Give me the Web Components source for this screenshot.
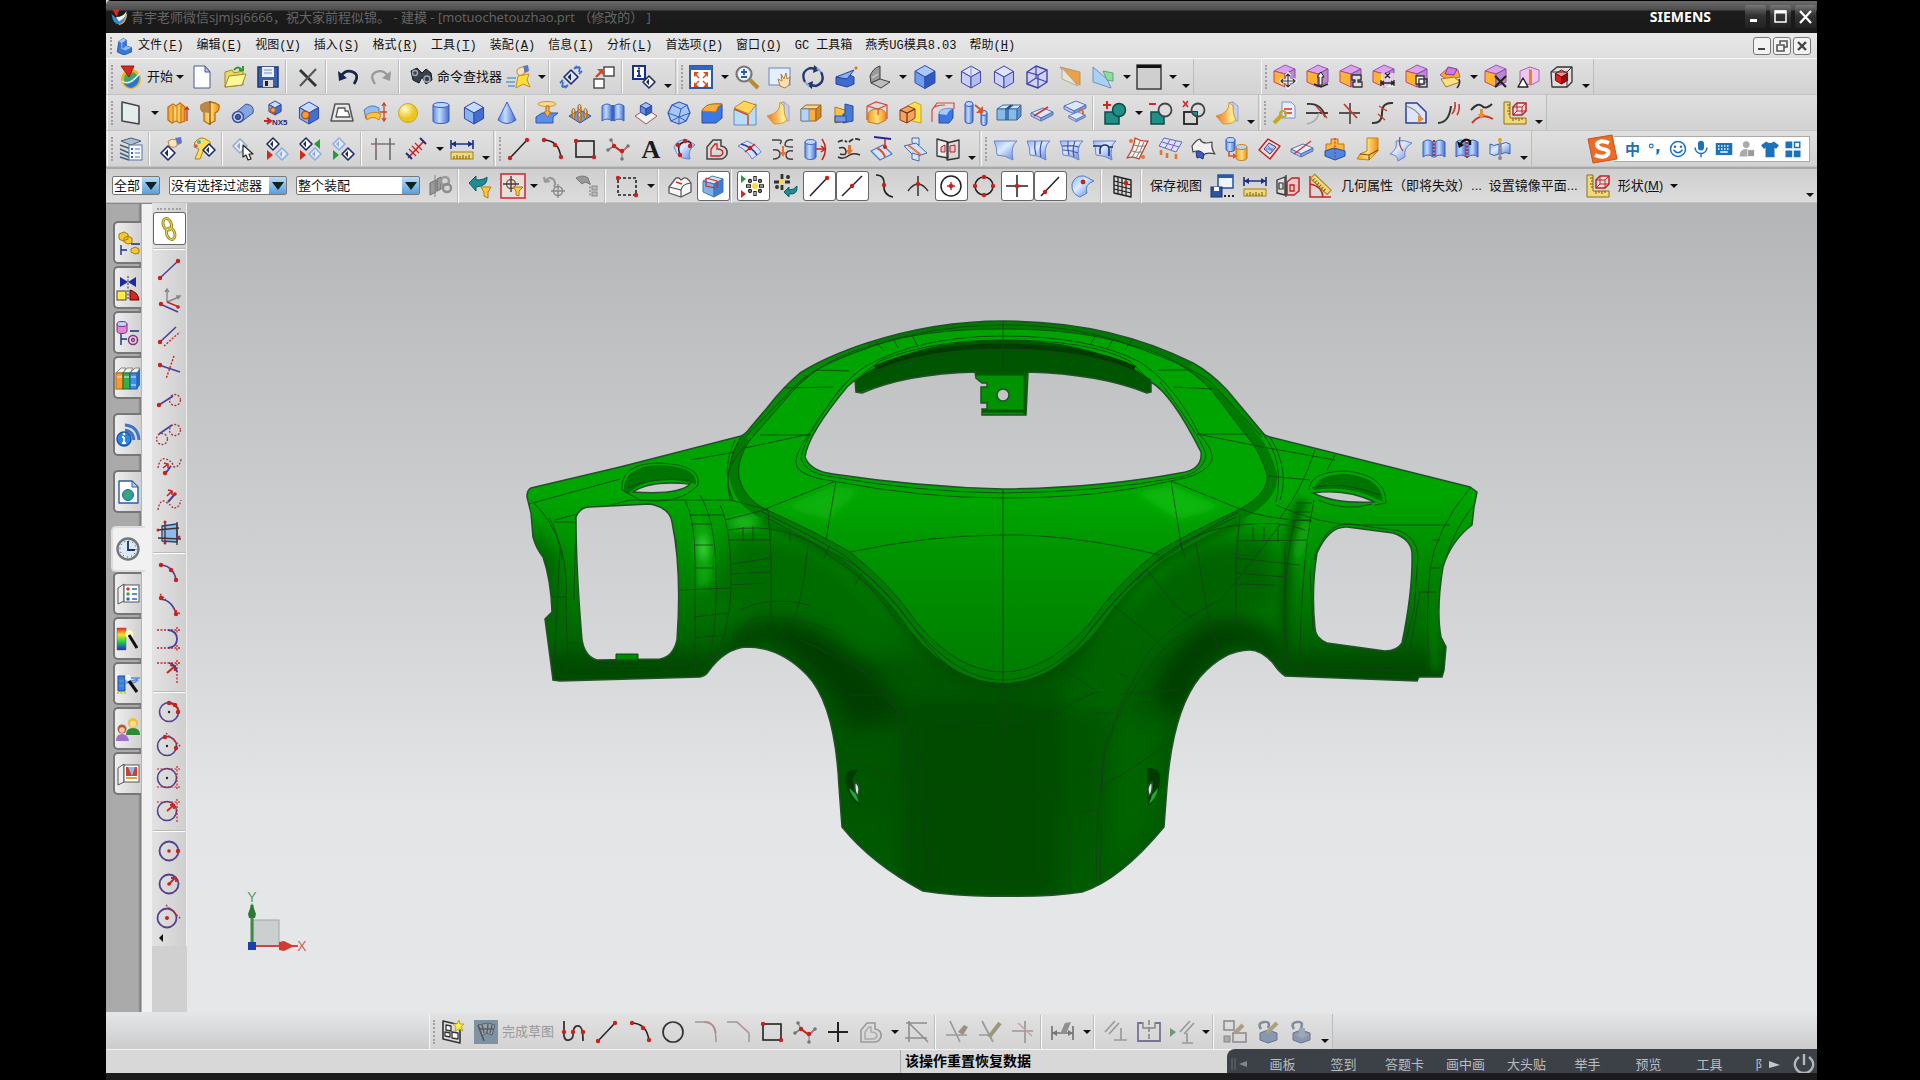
<!DOCTYPE html>
<html lang="zh-CN">
<head>
<meta charset="utf-8">
<title>建模 - motuochetouzhao.prt</title>
<style>
	html, body { margin: 0; height: 100%; background: #000; }
	body { font-family: "Liberation Sans", "Noto Sans CJK SC", sans-serif; font-size: 13px; color: #111; }
</style>
</head>
<body>
<nx-window>
	<nx-titlebar slot="title">青宇老师微信sjmjsj6666，祝大家前程似锦。 - 建模 - [motuochetouzhao.prt （修改的） ]</nx-titlebar>
	<nx-menubar slot="menu"></nx-menubar>
	<nx-row slot="bars">
		<nx-toolbar items="start:开始 v new open save | cut | undo redo | binoc:命令查找器 hand v | swap parts | info ;"></nx-toolbar>
		<nx-toolbar items="fit v zoom pan rotate persp laptop v shaded v wire1 wire2 wire3 clipA clipB v swatch v ;"></nx-toolbar>
		<nx-toolbar apart items="mvMove mvPull mvPat mvDim mvGroup mvFold v mvDel mvTri mvRed ;"></nx-toolbar>
	</nx-row>
	<nx-row slot="bars">
		<nx-toolbar items="datum v extrude revolve tube nx5 block pocket bend sphere cyl box cone | hole pegs ribs pad gem edge draft flange shellA trimB domeA offsetB round scale split thick pieces | unite v subtract intersect flangeB ;"></nx-toolbar>
		<nx-toolbar items="wrench jn1 jn2 jn3 corner jn4 jn5 measureBox ;"></nx-toolbar>
	</nx-row>
	<nx-row slot="bars">
		<nx-toolbar items="layers | handDiamond paint | pick diaA diaB diaC | hash comb v ruler ;"></nx-toolbar>
		<nx-toolbar items="line arc rect spline letter curveSheet offsetCurve sheetCurve bridge project joinCurve onSheet cross mirror ;"></nx-toolbar>
		<nx-toolbar items="surf1 surf2 surf3 surf4 mesh meshB drape bodies pad3d thickB plusBody boot twist sew unsew pinch ;"></nx-toolbar>
		<nx-ime></nx-ime>
	</nx-row>
	<nx-row slot="bars" last>
		<nx-filter wide="48" label="类型过滤器">全部</nx-filter>
		<nx-filter wide="118" label="选择过滤器">没有选择过滤器</nx-filter>
		<nx-filter wide="124" label="范围">整个装配</nx-filter>
		<nx-toolbar plain items="chainGrey | teal target u greyA greyB | marquee v | house cubeSel* | snapAll* snapCfg snapEnd* snapMid* snapCurve snapCross snapCenter* snapQuad snapPoint* snapOn* snapFace | grid | _:保存视图 saveView ruler boxes angle _:几何属性（即将失效）... _:设置镜像平面... measureBox _:形状(M) v"></nx-toolbar>
		<nx-toolbar plain end items=";"></nx-toolbar>
	</nx-row>
	<nx-tabs slot="side"></nx-tabs>
	<nx-toolbar slot="side" vertical items="chain* | vLine vAxes vPar vPerp vTan1 vTan2 vFree1 vFree2 vBox | vArc vArc2 vArc3 vArc4 | vC1 vC2 vC3 vC4 | vC5 vC6 vC7 <"></nx-toolbar>
	<nx-viewport slot="view"></nx-viewport>
	<nx-row slot="foot" foot>
		<nx-toolbar items="sketch finish:完成草图 profile line arc circle filletG chamferG rect spline plus offsetG v triG | trimG extendG cornerG | dimG v | perpG boxG autoG v | sqG lockG lockH ;"></nx-toolbar>
	</nx-row>
	<nx-status slot="status">该操作重置恢复数据</nx-status>
	<nx-dock slot="dock"></nx-dock>
</nx-window>

<script>
// ---------- icon drawing helpers, all on a 24 x 24 grid ----------
const L = (d, c = '#222', w = 1.5, x = '') => `<path d="${d}" fill="none" stroke="${c}" stroke-width="${w}" ${x}/>`;
const F = (d, f, s = 'none', w = 1) => `<path d="${d}" fill="${f}" stroke="${s}" stroke-width="${w}" stroke-linejoin="round"/>`;
const D = (x, y, r = 2.2, c = '#c8201c') => `<circle cx="${x}" cy="${y}" r="${r}" fill="${c}"/>`;
const O = (x, y, r, c = '#222', w = 1.5, f = 'none', x2 = '') => `<circle cx="${x}" cy="${y}" r="${r}" fill="${f}" stroke="${c}" stroke-width="${w}" ${x2}/>`;
const R = (x, y, w, h, f, s = 'none', sw = 1) => `<rect x="${x}" y="${y}" width="${w}" height="${h}" fill="${f}" stroke="${s}" stroke-width="${sw}"/>`;
const DASH = 'stroke-dasharray="2 1.5"';
const cube = (x, y, s, top, left, right, line = '#3346a0') => {
	const a = s * .87, b = s / 2;
	return F(`M${x} ${y - s}l${a} ${b}l${-a} ${b}l${-a} ${-b}z`, top, line)
		+ F(`M${x - a} ${y - b}l${a} ${b}v${s}l${-a} ${-b}z`, left, line)
		+ F(`M${x + a} ${y - b}l${-a} ${b}v${s}l${a} ${-b}z`, right, line);
};
const blueCube = (x = 12, y = 12, s = 11) => cube(x, y, s, '#c3dcff', '#86b4f5', '#456fce');
// front-left face large, as the move-face tools show it
const purple = F('M1 6L12 0L22 4L12 9z', '#d9a3ee', '#9a55b4') + F('M1 6L12 9V22L1 17z', '#ffb52c', '#c4447a') + F('M12 9L22 4V17L12 22z', '#b98ad0', '#8b4ba4');
const diamond = (x, y, s, f = '#fff', c = '#1d2c66') =>
	F(`M${x} ${y - s}l${s} ${s}l${-s} ${s}l${-s} ${-s}z`, f, c, 1.6) + F(`M${x} ${y - s * .55}v${s * 1.1}l${-s * .5} ${-s * .55}z`, c);
const rulerBar = R(1, 15, 22, 7, '#f3d87a', '#a08020') + L('M4 22v-3M7 22v-4M10 22v-3M13 22v-4M16 22v-3M19 22v-4', '#70590c', 1);
const sheet = (x = '') => F('M1 4H24Q17 9 20 23Q12 18 4 18Q4 10 1 4z', 'url(#gBlue)', '#6d83cc') + x;
const ribs = (x = '') => F('M1 5q5-4 10 0v15q-5-4-10 0z', 'url(#gBlueH)', '#3c64b4') + F('M13 5q5-4 10 0v15q-5-4-10 0z', 'url(#gBlueH)', '#3c64b4') + x;
const sweep = F('M14 2L18 1V13L21 20H23V5L18 1z', '#c3cff0', '#9aa5cc') + F('M14 1Q15 12 1 15L8 23Q20 23 21 18Q18 15 18 5z', 'url(#gSweep)', '#d49a38');
const cyl = (x, y, w, h, f = 'url(#gBlueH)', s = '#3a5cb8') =>
	F(`M${x} ${y}v${h}a${w / 2} 2.5 0 0 0 ${w} 0v${-h}`, f, s) + `<ellipse cx="${x + w / 2}" cy="${y}" rx="${w / 2}" ry="2.5" fill="#bcd6ff" stroke="${s}"/>`;
const slab = (y, f = '#dbe8fd') => F(`M1 ${y + 5}L13 ${y}L23 ${y + 4}L11 ${y + 10}z`, f, '#5a74b8') + F(`M1 ${y + 5}v3l10 5v-3z`, '#b4caf0', '#5a74b8') + F(`M23 ${y + 4}v3l-12 6v-3z`, '#7f9fdd', '#5a74b8');
const box3 = (f, g, h, s = '#9a6a20') => F('M2 8L7 4H22L17 8z', f, s) + F('M2 8h15v12H2z', g, s) + F('M17 8l5-4v12l-5 4z', h, s);
const ball = O(12, 12, 9.5, '#c9a820', 1, 'url(#gSphere)');
const knob = (x, y) => D(x, y, 1.8, '#777');
const lock = F('M4 13L12 10L21 13V20L12 23L4 20z', '#8797ad', '#66758c') + L('M5 9Q1 3 8 2T12 8', '#7e8b9c', 2.5);

const ICONS = {
	start: O(12, 14, 8.5, '#e8b419', 3, '#38a86b') + F('M4 16Q11 22 20 9Q22 20 12 23Q6 22 4 16z', '#2c76c9') + L('M3 16Q10 22 21 8', '#d7f0ff', 1.6) + F('M2 1L15 1L10 12z', '#d62822', '#9f1712'),
	new: F('M4 1H15L20 7V23H4z', '#fdfdff', '#4b5896') + F('M15 1V7H20z', '#b8c3e8', '#4b5896'),
	open: F('M2 7L9 5L11 8L20 6V20L2 22z', '#eadb60', '#a08b22') + F('M6 11L23 9L19 20L2 22z', '#fff79b', '#a08b22') + L('M11 5Q15 0 19 5M16 5h4V1', '#32973a', 2),
	save: R(2, 2, 20, 20, '#3a5fae', '#1c3678', 1.5) + R(6, 2, 12, 10, '#e9f0fb') + L('M8 5h8M8 8h8', '#7a8fc0', 1) + R(7, 15, 10, 7, '#d9d9d9') + R(9, 16, 3, 5, '#222'),
	cut: L('M4 5L20 21', '#333', 2.8) + L('M20 4L4 21', '#555', 2),
	undo: L('M18 19Q24 10 17 7Q10 4 5 11', '#15254f', 2.6) + F('M2 6L3 16L11 13z', '#15254f'),
	redo: L('M6 19Q0 10 7 7Q14 4 19 11', '#999', 2.2) + F('M22 6L21 16L13 13z', '#999'),
	binoc: F('M2 6L8 3L13 8L17 4L22 8L23 15L17 19L13 12L10 18L4 15z', '#3a3f4a', '#15171c') + O(6, 8, 2.5, '#9aa7bb', 1.4) + O(18, 14, 3, '#9aa7bb', 1.4),
	hand: F('M12 11L23 9L21 15L24 22L17 19L10 23L11 16z', '#ffdf3a', '#c98e12') + L('M1 13h9M0 17h9M2 21h7', '#5c9bd6', 1.6) + F('M11 5Q16 0 19 3L18 9Q13 12 11 8z', '#ffe1b5', '#b08a58') + F('M17 1l5-1l1 6l-4 2z', '#5a78c9'),
	swap: diamond(12, 12, 7, '#dfe6f7') + L('M3 22L8 21M3 22L4 17M21 2L16 3M21 2L20 7M4 15l-3 3M9 20l-3 3M15 4l3-3M20 9l3-3', '#3c6fd0', 1.8),
	parts: R(12, 2, 10, 9, '#fff', '#444', 1.4) + R(2, 14, 10, 9, '#fff', '#444', 1.4) + L('M4 12L9 7', '#d8441c', 2.4) + F('M5 4H11V10z', '#d8441c'),
	info: R(1, 1, 12, 13, '#fff', '#1b2f87', 2) + L('M7 5v6M5 11h4M5 6h2', '#1b2f87', 1.8) + R(6, 2.5, 2, 2, '#1b2f87') + diamond(17, 17, 6),
	fit: R(1, 1, 22, 22, '#fff', '#2c5aa8', 2) + R(1, 1, 22, 4, '#3168bd') + L('M6 9l4 4M18 9l-4 4M6 20l4-4M18 20l-4-4', '#dd4a1c', 1.4) + F('M5 7h5l-5 5zM19 7h-5l5 5zM5 22h5l-5-5zM19 22h-5l5-5z', '#dd4a1c'),
	zoom: L('M15 15L23 23', '#b58c36', 4) + O(9, 9, 7.5, '#777', 2.2, '#e9f2ff') + L('M9 4v6M6 7h6M6 12h6', '#3157a8', 1.8),
	pan: R(1, 3, 21, 17, '#e4efff', '#6d85bc') + F('M10 14L14 16L13 9L16 14L18 8L19 14L22 12L21 20L17 23L12 21z', '#ffe0b0', '#b07c33'),
	rotate: L('M4 17Q-1 7 9 3L15 4M20 7Q25 17 15 21L9 20', '#22386f', 2.4) + F('M13 0L19 5L12 8zM11 24L5 19L12 16z', '#22386f') + L('M4 17l4 4M20 7l-4-4', '#8fa9d8', 2),
	persp: F('M2 12L14 9L20 12V19L13 22L2 19z', '#3f6bd0', '#2541a0') + F('M2 12L20 5L13 14z', '#8bb0f5', '#2541a0') + D(22, 3, 1.5, '#dd6a1c'),
	laptop: F('M3 11Q6 3 13 1V14L4 18z', '#999', '#3f3f3f') + F('M4 18L13 14L23 17L14 23z', '#bdbdbd', '#3f3f3f') + L('M5 13L11 9', '#ccc', 1.5),
	shaded: cube(12, 12, 11.5, '#a9c8fb', '#6f9df0', '#3158bd', '#2f4dac'),
	wire1: cube(12, 12, 11, '#dfe5ff', '#c7d0fa', '#b3bdf0', '#4540a8') + L('M12 1v11', '#8a88d0', 1),
	wire2: cube(12, 12, 11, '#dfe5ff', '#cbd3fa', '#b9c2f3', '#4540a8'),
	wire3: F('M2 7L11 1L22 5V17L13 23L2 19z', '#cfd3ef', '#4540a8', 1.4) + L('M2 7L13 10L22 5M13 10V23M11 1V13L2 19M11 13L22 17', '#4540a8', 1.2),
	clipA: F('M2 2L22 7V20L11 15z', '#e7a24a', '#b8955c') + F('M4 3L20 21L4 14z', '#e9e4da', '#b6aa98'),
	clipB: F('M2 2L16 14L20 23L2 17z', '#a9d0f5', '#6f92bd') + F('M12 6L22 8V16L16 15z', '#8fdca0', '#5ea873'),
	swatch: R(0, 0, 24, 24, '#cfcfcf', '#333', 1.4) + R(0, 0, 24, 3, '#111'),
	mvMove: purple + L('M15 9v13M8 16h14M13 11l2-2l2 2M13 20l2 2l2-2M10 14l-2 2l2 2M20 14l2 2l-2 2', '#fff', 3.4) + L('M15 9v13M8 16h14M13 11l2-2l2 2M13 20l2 2l2-2M10 14l-2 2l2 2M20 14l2 2l-2 2', '#333', 1.2),
	mvPull: purple + F('M15 7l3 5h-2v8h-3v-8h-2z', '#eee', '#222') + L('M8 19l7 3l7-3', '#222', 1.4),
	mvPat: purple + F('M13 10h9v5h-3v2h4v5h-9v-5h2v-2h-3z', '#ddd', '#333', 1.3),
	mvDim: purple + R(9, 8, 14, 14, '#ffffff99') + L('M9 18h13M9 15v6M22 15v6M12 16l-3 2l3 2M19 16l3 2l-3 2M13 8l5 5M18 8l-5 5', '#222', 1.3),
	mvGroup: purple + R(11, 11, 8, 8, '#fff', '#333', 1.4) + R(14, 14, 8, 8, 'none', '#333', 1.4),
	mvFold: F('M2 10L10 3L20 5L22 12L10 15z', '#ffa920', '#a455b8') + F('M10 2l9 2l-3 6l-9-1z', '#cf7be0', '#823c94') + F('M3 14L16 12L22 17L8 22z', '#ffe186', '#a87820') + L('M19 23q4-5 2-9', '#333', 1.6),
	mvDel: purple + L('M11 11L22 22M22 11L11 22', '#222', 2.2),
	mvTri: F('M3 6L13 2L22 5V16L14 20L3 17z', '#edc6ef', '#a860b8') + F('M12 4l3 1v15l-3-1z', '#f08024') + F('M6 13L11 22H1z', '#fff', '#222', 1.4),
	mvRed: F('M1 7L7 2H22V17L17 22H2z', '#dedede', '#333', 1.3) + cube(11.5, 12, 7, '#ff8d88', '#dd1f24', '#a0090e', '#80060a') + L('M1 7H17V22M17 7L22 2', '#333', 1),
	datum: F('M3 1L20 5V23L3 20z', '#e4eee8', '#445', 1.6),
	extrude: F('M3 6L8 3L11 5L15 2L20 6V20L15 22L11 20L7 22L3 19z', 'url(#gGold)', '#c6700c', 1.3) + L('M8 5v16M12 5v15M16 4v17', '#c6700c', 1) + L('M22 20V7M20 9l2-3l2 3', '#c22', 1.2),
	revolve: F('M3 4Q12-2 21 4Q22 10 17 12V20L11 23L6 20V11Q2 10 3 4z', 'url(#gGold)', '#b5700f', 1.3) + F('M3 4q4-4 8-3v11l-5-1q-4-1-3-7z', '#bb8748') + L('M12 0v24', '#8b5510', 1.4),
	tube: F('M3 13L15 3Q24 4 22 12L10 21z', '#86a4df', '#38549f') + O(7, 16, 5.5, '#38549f', 1.5, '#b9ccf1') + O(7, 16, 2.6, '#26397a', 1, '#44599a'),
	nx5: blueCube(11, 7, 7) + O(9, 9, 2.5, '#c05a18', 1.3, '#f6a050') + L('M0 20h6M3 17l4 3l-4 3', '#c22', 2) + `<text x="8" y="24" font-family="Liberation Sans" font-weight="bold" font-size="8" fill="#25307a">NX5</text>`,
	block: blueCube() + O(8.5, 14, 3.8, '#b4560f', 1.5, '#ff9a3a'),
	pocket: F('M5 3H19L23 20H1z', '#e8e8e8', '#555', 1.5) + F('M8 7h7v3h3l2 6H6z', '#fff', '#555', 1.3),
	bend: F('M1 9Q8 2 16 7V15Q8 11 3 18z', '#8fbff5', '#5677b8') + F('M3 14Q11 9 18 13L16 19Q10 14 4 19z', '#ffc240', '#c78518') + L('M21 2v18M19 5l2-3l2 3M19 17l2 3l2-3M17 11h7', '#c8452c', 1.3),
	sphere: ball,
	cyl: cyl(4, 4, 16, 16),
	box: blueCube(),
	cone: F('M12 1L21 19Q12 26 3 19z', 'url(#gBlueH)', '#3a5cb8'),
	hole: F('M1 16L7 12H23L18 16V22H1z', '#5e8fe6', '#2d55ac') + `<ellipse cx="12" cy="3" rx="9" ry="2.500" fill="#ffd98a" stroke="#c9943c"/>` + F('M11 5h3v6h2l-3.500 5l-3.500-5h2z', '#f2b44d', '#b46c1c'),
	pegs: F('M1 15L12 9L23 15L12 22z', '#6f9ae8', '#2d55ac') + cyl(4, 10, 3, 5, '#f29b30', '#a9630f') + cyl(10, 6, 3, 5, '#f29b30', '#a9630f') + cyl(16, 10, 3, 5, '#f29b30', '#a9630f') + cyl(10, 14, 3, 4, '#f29b30', '#a9630f'),
	ribs: ribs(L('M12 4v16', '#3c64b4', 2)),
	pad: F('M1 15L12 8L23 15L12 23z', '#eef2fb', '#b35438') + cube(12, 8, 6.5, '#9ec2fb', '#5f92ec', '#3a61bf'),
	gem: F('M12 1L20 4L23 12L19 20L12 23L4 20L1 12L5 4z', '#a5c8f8', '#3a5cb8', 1.3) + L('M5 4L14 8L20 4M14 8L12 16L4 20M12 16L19 20M1 12L12 16L23 12M12 16V23', '#3a5cb8', 1),
	edge: F('M2 10Q5 3 16 3H22V17L16 22H2z', '#3c78e2', '#2a4d9c') + F('M2 10Q5 3 14 3H22Q17 5 16 11z', '#ffae35', '#b9741a'),
	draft: F('M1 9L23 3V24H1z', '#b9dcf8', '#6590bd') + F('M1 7L11 0L23 4L16 13z', '#ffd55a', '#b98a22') + L('M1 8L15 14M15 14V24', '#c8542c', 1.6),
	flange: sweep,
	shellA: box3('#ffd38c', '#f9ae47', '#d78124') + F('M2 8h8v12H2z', '#b4d4f7', '#6b8fb9'),
	trimB: F('M3 6L13 9V20L3 22z', '#ffc34a', '#b37c1c') + F('M13 3L21 5V20L11 22V13H13z', '#447bd6', '#2a4d9c') + F('M3 15h11v6H3z', '#6f9ae8', '#2a4d9c'),
	domeA: F('M3 21V14Q4 8 12 8Q20 8 21 13V19L13 23z', 'url(#gGold)', '#b9801e') + L('M2 5L11 1L22 4V18M2 5L13 8L22 4M13 8V14M2 5V19', '#d24b3c', 1.2),
	offsetB: F('M9 5L17 1L23 4V22L14 20z', '#ffe04a', '#c9a020') + F('M2 9L10 5L17 8V17L9 22L2 19z', '#f5a45a', '#8a3d22') + L('M2 9L9 12L17 8M9 12V22', '#6b2d18', 1.2),
	round: F('M8 20V13Q9 8 15 8H22V17L18 22H8z', '#3c78e2', '#2a4d9c') + F('M8 13Q9 8 15 8H22Q17 9 16 14z', '#a8cbff') + L('M1 21V9L6 2H23V8M1 9Q3 4 14 4', '#d24b3c', 1.2),
	scale: cyl(1, 3, 8, 17) + cyl(17, 12, 6, 10) + L('M11 4L17 9', '#d8542c', 2) + F('M19 5v7h-7z', '#d8542c'),
	split: F('M0 8L6 4H24L20 8z', '#cfe8fb', '#44679c') + F('M0 8H20V19H0z', '#86bce8', '#44679c') + F('M20 8L24 4V15L20 19z', '#5a90cf', '#44679c') + L('M9 19V8L14 4M11 19V8L16 4', '#1c4b88', 1.2),
	thick: slab(7) + L('M4 15L18 6', '#c8392c', 1.6),
	pieces: slab(0) + `<g transform="translate(5 11) scale(.75)">${slab(0)}</g>` + L('M16 8Q21 9 20 14', '#d8702c', 2),
	unite: R(2, 11, 14, 12, '#1e9088', '#104a46', 1.5) + O(16, 9, 6.5, '#104a46', 1.5, '#1e9088') + L('M4 0v8M0 4h8', '#d22', 2),
	subtract: R(2, 11, 13, 12, '#1e9088', '#104a46', 1.5) + O(16, 9, 6.5, '#444', 1.8, '#dcdcdc') + L('M0 3h7', '#d22', 2),
	intersect: R(2, 11, 13, 12, 'none', '#222', 1.8) + F('M10 11h5v4q-5 0-5-4z', '#1e9088') + O(16, 9, 6.5, '#444', 1.8) + L('M1 0l5 6M6 0l-5 6', '#d22', 1.6),
	flangeB: sweep,
	wrench: F('M10 1h9l4 4v12H10z', '#e9effc', '#7b92c6') + L('M12 8h8M12 12h8', '#c8392c', 1.6) + L('M2 22L10 14', '#c7a822', 4) + O(11, 13, 3, '#c7a822', 2),
	jn1: L('M1 12h22', '#444', 2) + L('M2 3Q17 2 20 16', '#333', 1.8) + L('M2 23Q12 21 14 12', '#aaa', 1.5) + L('M11 5L22 17', '#c8392c', 1.6),
	jn2: L('M1 12h21M12 2v21', '#555', 1.8) + L('M6 3L19 17', '#c8392c', 1.8),
	jn3: L('M1 22Q11 23 11 12T22 2', '#333', 2) + L('M8 5l8 5M7 13l7 6', '#c8392c', 1.4),
	corner: F('M2 2H13L22 11V22H2z', '#dfe4f7', '#2c3f94', 1.5) + L('M2 5Q13 8 18 18', '#888', 1.2) + F('M14 14l6 4l-6 4z', '#e88f35'),
	jn4: L('M1 22Q12 22 14 5', '#333', 2) + L('M15 13Q19 8 18 1M20 14Q23 9 22 3', '#c8392c', 1.6),
	jn5: L('M1 9Q8 1 12 5T22 3', '#333', 2) + L('M2 22Q11 11 23 18', '#c8392c', 2) + F('M10 8h3v5h2l-4 5l-3-5h2z', '#e88f35'),
	measureBox: F('M1 1H7V17H23V23H1z', '#f3d87a', '#8d7018') + L('M7 4H4M7 7H5M7 10H4M7 13H5M10 17v3M13 17v2M16 17v3M19 17v2', '#70590c', 1) + F('M10 6L14 2H23V10L19 14H10z', '#f7dede', '#b5242b', 1.5) + L('M10 6H19V14M19 6L23 2M14 2V10H23M14 10L10 14', '#b5242b', 1),
	layers: F('M2 4L12 1L22 4L12 8z', '#aebed0', '#44617d') + L('M1 8L12 12M1 12L10 16M1 16L10 20M1 20L10 23', '#44617d', 1.6) + R(10, 8, 13, 15, '#f4f8ff', '#5a74a8') + L('M16 12h5M16 16h5M16 20h5', '#5a74a8', 1.2) + L('M12 12h2M12 16h2M12 20h2', '#3168bd', 2),
	handDiamond: diamond(9, 16, 7) + F('M9 4Q13 1 18 3L18 9Q13 12 10 8z', '#ffe1b5', '#b08a58') + F('M16 1l6-1l1 6l-4 2z', '#5a78c9'),
	paint: F('M3 5Q9-2 15 3Q21 5 17 11L11 14L8 22H3L7 12L2 10z', '#ffe05a', '#a8841e') + D(7, 5, 2, '#40a8d8') + diamond(17, 13, 6) + D(4, 9, 1.8, '#e04a8a'),
	pick: diamond(8, 9, 7, '#eef3ff', '#93a8cf') + F('M11 8L21 17H17L19 22L16 23L14 18L11 20z', '#fff', '#222', 1.2),
	diaA: diamond(8, 7, 6) + F('M2 13v10l6-5z', '#d02a1e') + diamond(17, 17, 6, '#e3ecff', '#8faee0'),
	diaB: diamond(8, 7, 6) + F('M22 2v10l-6-5z', '#2a9a36') + F('M2 13v10l6-5z', '#d02a1e') + diamond(17, 17, 6, '#e3ecff', '#8faee0'),
	diaC: diamond(8, 7, 6, '#e3ecff', '#8faee0') + F('M2 13v10l6-5z', '#2a9a36') + diamond(17, 17, 6),
	hash: L('M0 7h24', '#777', 1.5) + L('M5 1v22M19 1v22', '#666', 1.5) + L('M5 7v6', '#d66', 1),
	comb: L('M4 21L20 4', '#c22', 1.6) + L('M2 16l6 6M16 1l6 6', '#1b2f87', 2) + L('M5 12l7 7M8 9l7 7M11 6l7 7', '#c22', 1.3),
	ruler: L('M1 3v9M23 3v9M1 7h22', '#1b2f87', 1.6) + F('M1 7l5-3v6zM23 7l-5-3v6z', '#1b2f87') + rulerBar,
	line: L('M3 21L20 3') + D(3, 21) + D(20, 3),
	arc: L('M3 3Q19 3 21 21') + D(4, 3) + D(15, 8) + D(21, 20),
	rect: R(3, 4, 18, 16, 'none', '#222', 1.6) + D(3, 4) + D(21, 20),
	spline: L('M2 13L8 9L16 15L22 9', '#c22', 1.5) + L('M5 3l3 6M16 22v-7M2 13l6-4M22 9l-6 6', '#888', 1.2) + L('M8 9Q12 12 16 15', '#c22', 1.8) + knob(2, 13) + knob(5, 3) + knob(22, 9) + knob(16, 22) + D(8, 9) + D(16, 14),
	letter: `<text x="12" y="21" text-anchor="middle" font-family="Liberation Serif" font-weight="bold" font-size="26" fill="#1a1a1a">A</text>`,
	curveSheet: F('M2 10Q6 1 16 3L23 8Q15 13 18 22Q6 23 2 10z', 'url(#gBlue)', '#6d83cc') + L('M8 18Q4 7 12 5T19 10', '#222', 1.5) + D(8, 18) + D(6, 8) + D(13, 4) + D(18, 9),
	offsetCurve: L('M2 22V10L8 3H16V9Q23 10 22 17Q20 22 15 22z', '#444', 1.5) + L('M6 19V12L10 7H12V12Q18 12 18 16Q17 19 14 19z', '#c22', 1.3),
	sheetCurve: F('M0 9L9 4Q20 9 23 15L14 22Q10 14 0 9z', '#d8e3fa', '#6d83cc') + L('M3 7Q14 10 19 18', '#2c3f94', 1.6) + L('M7 15L17 7', '#c22', 1.6) + D(12, 11),
	bridge: L('M1 3H8Q12 3 9 7M22 3Q14 2 14 8Q14 10 22 10M2 13Q9 12 9 17T2 22M22 14Q15 13 15 18T22 22', '#444', 1.5) + F('M11 9h2v6h2l-3 5l-3-5h2z', '#e8732c'),
	project: cyl(1, 5, 11, 15) + L('M18 2Q25 12 18 23', '#c22', 1.5) + L('M12 12h8M17 9l4 3l-4 3', '#c22', 1.5),
	joinCurve: L('M1 5Q6 2 10 5M12 5Q17 0 23 3', '#333', 1.8, 'stroke-dasharray="5 2"') + L('M1 20Q6 23 11 19T23 18M2 11Q8 9 9 14T3 17', '#333', 1.6) + F('M11 8h3v5h2l-4 5l-3-5h2z', '#e8732c'),
	onSheet: F('M1 14L13 8L22 17L10 23z', '#d8e3fa', '#4f7fc0', 1.3) + L('M4 0L21 2', '#2424a0', 2) + L('M15 2v8', '#c22', 1.4) + L('M7 11Q13 14 15 20', '#d8542c', 2) + D(15, 10, 2),
	cross: F('M9 1H16V8L9 6z', '#d7e8fb', '#4a66ac') + F('M1 9L13 6L24 16L12 20z', '#cfe2fb', '#4a66ac') + F('M9 16L16 18V24L9 22z', '#d7e8fb', '#4a66ac') + L('M5 8L18 18', '#e8732c', 1.8),
	mirror: F('M1 2L12 5V21L1 19z', '#eee', '#333', 1.3) + F('M11 6L23 3V21L11 23z', 'none', '#333', 1.3) + F('M5 10L9 8V15L5 15zM14 9L19 8V15L14 15z', '#f2c3cb', '#b5242b'),
	surf1: sheet(), surf2: sheet(L('M9 4Q8 11 10 18M16 4Q13 12 15 20', '#4654b0', 1.2)),
	surf3: sheet(L('M9 4Q8 11 10 18M16 4Q13 12 15 20M3 9Q12 8 20 10M4 13Q12 13 19 16', '#4654b0', 1.2)),
	surf4: sheet(L('M8 17V12Q9 8 13 8Q17 8 17 12V19M1 9h8M17 10h4', '#223080', 1.6)),
	mesh: F('M10 1Q17 5 23 4L14 22Q8 19 2 21Q9 11 10 1z', '#f9f5f2', '#c0402c', 1.3) + L('M9 8Q14 10 20 9M7 14Q12 16 17 15M15 4Q12 14 7 20M19 5Q16 14 11 21', '#8d7a76', 1) + D(6, 4, 2, '#e8732c') + D(18, 20, 2, '#e8732c'),
	meshB: F('M6 1L24 5L18 15L1 9z', '#dfe2fb', '#6a63c0') + L('M12 3L7 11M18 4L13 13M4 5L21 10', '#6a63c0', 1) + L('M3 13v5M9 16v5M18 17v5', '#e8732c', 2.6),
	drape: F('M1 9Q5 3 9 2Q11 8 21 5Q20 12 24 17Q16 15 12 18Q8 12 2 15z', '#f1f1f1', '#444', 1.2) + F('M5 15Q8 12 13 17L12 22Q8 19 6 21z', '#3c5bb8', '#223080'),
	bodies: cyl(2, 3, 9, 9) + cyl(12, 10, 11, 11, 'url(#gGold)', '#b9801e') + L('M5 15v4h5', '#d8542c', 1.6) + F('M9 16l4 3l-4 3z', '#d8542c'),
	pad3d: F('M2 13L11 2L23 9L13 22z', '#f7d9d4', '#b5242b', 1.4) + F('M7 12L12 6L19 10L13 17z', '#b7cdf3', '#2c3f94') + L('M9 12h7M11 9l4 5', '#5f73c0', 1),
	thickB: slab(7, '#e8eefc') + L('M4 17L21 4', '#c8392c', 1.4),
	plusBody: F('M8 2h7v5h6v7H3V7h5z', '#ffb43c', '#b9741a') + F('M2 14L11 11L22 14V19L12 23L2 19z', '#4f86e0', '#2a4d9c') + L('M12 1v22', '#c22', 1, DASH),
	boot: F('M11 1H22V14L13 23L1 22L4 17L11 14z', 'url(#gGold)', '#c6860c') + L('M4 17L13 18L22 13M13 18V23', '#8a4d10', 1.2),
	twist: F('M7 4Q14 2 23 6Q14 11 16 20L9 24Q9 18 1 17Q9 12 7 4z', 'url(#gBlue)', '#6d83cc') + L('M11 0Q9 8 14 14', '#c8392c', 1.2),
	sew: ribs(L('M12 3v18', '#c22', 2, DASH)), unsew: ribs(L('M12 5v16', '#c22', 2, DASH) + L('M5 8Q9 0 15 4V8', '#111', 2.4) + F('M2 4l2 7l5-3z', '#111')),
	pinch: F('M2 7Q6 10 11 7V17Q6 20 2 17zM13 7Q18 4 22 7V17Q18 14 13 17z', 'url(#gBlue)', '#3c64b4') + L('M12 1v22', '#888', 1.6) + D(12, 3, 2, '#e8a02c') + D(12, 21, 2, '#888'),
	chainGrey: F('M2 9L8 6V18L2 21zM9 5L13 3V15L9 17z', '#9a9a9a', '#6d6d6d') + O(17, 7, 4, '#999', 2.4) + O(19, 14, 4, '#8b8b8b', 2.4) + L('M7 1v22', '#888', 1),
	teal: F('M1 9L8 2V6Q16 6 19 3Q20 12 8 13V17z', '#1f8d96', '#0e5d66') + F('M13 13H23L20 18V24L16 22V18z', '#ffc93a', '#a87c18'),
	target: R(0, 0, 24, 24, '#e9dede', '#cc3038', 1.6) + O(10, 10, 4.5, '#664', 1.3) + L('M10 2v16M2 10h16', '#533', 1.4) + F('M12 13H22L18 17V22L15 21V17z', '#ffc93a', '#a87c18'),
	greyA: L('M3 8Q7 1 12 6Q14 10 12 13M3 8l-1-5M3 8l5-1', '#999', 2.2) + O(16, 17, 4.5, '#888', 1.4) + L('M16 10v14M9 17h14', '#888', 1.3),
	greyB: F('M1 4Q8 0 13 4L15 10L10 8L7 10z', '#999', '#777') + L('M15 9v14', '#888', 1.4, DASH) + R(17, 12, 5, 4, '#bbb', '#888') + R(17, 18, 5, 4, '#bbb', '#888'),
	marquee: L('M3 4H21V21H3z', '#222', 1.6, 'stroke-dasharray="3 2"') + D(3, 4) + D(21, 21),
	house: F('M1 13L8 4Q11 3 13 6L16 4Q19 3 23 9V18L13 23L1 19z', '#f7f7f7', '#555', 1.3) + L('M1 13L13 16V23M13 16Q14 10 23 9', '#555', 1.2) + L('M8 8L14 10', '#c8392c', 1.8),
	cubeSel: F('M2 7L11 2L22 5L13 10z', '#d5e8fb', '#3c78b8') + F('M2 7L13 10V23L2 18z', '#7db4ec', '#3c78b8') + F('M13 10L22 5V18L13 23z', '#3d7ed0', '#3c78b8') + L('M5 4V12L14 14M5 4L16 7V14', '#d22', 1.2),
	snapAll: F('M0 1v8l5-4z', '#2a9a36') + F('M0 16v8l5-4z', '#d02a1e') + L('M14 2v5M14 17v5M5 12h5M18 12h5', '#222', 3.4) + L('M14 3v3M14 18v3M6 12h3M19 12h3', '#fff', 1.2) + D(14, 12, 3, '#ffdb3a') + O(9, 17, 1.4) + O(19, 17, 1.4) + O(9, 7, 1.4) + O(19, 7, 1.4),
	snapCfg: L('M8 0v5M8 11v5M0 8h5M11 8h5', '#333', 2.8) + D(8, 8, 2.4, '#ffdb3a') + O(3, 13, 1.2) + O(14, 3, 1.2) + F('M10 18L15 13V16Q20 16 23 12Q24 21 15 20V23z', '#1f8d96', '#0e5d66'),
	snapEnd: L('M3 22L20 4') + D(20, 4), snapMid: L('M2 22L22 2') + D(12, 12),
	snapCurve: L('M3 1Q12 1 11 11T20 23') + D(11, 11), snapCross: L('M2 17Q12 3 22 17M12 2v20', '#333', 1.5) + D(12, 10),
	snapCenter: O(12, 12, 10) + L('M12 8v8M8 12h8', '#c22', 1.4) + D(12, 12), snapQuad: O(12, 12, 9) + D(12, 3) + D(12, 21) + D(3, 12) + D(21, 12),
	snapPoint: L('M12 1v22M1 12h22') + D(12, 12), snapOn: L('M3 22L21 3') + D(7, 18),
	snapFace: F('M1 10Q4 1 13 2L23 7Q13 10 16 19L9 23Q0 20 1 10z', 'url(#gBlue)', '#4d7fc0') + D(12, 8, 2.4),
	grid: F('M3 2L20 6V23L3 19z', 'none', '#222', 1.4) + L('M7 3v17M11 4v17M15 5v17M3 7l17 4M3 11l17 4M3 15l17 4', '#222', 1.2) + D(15, 9),
	saveView: R(8, 1, 15, 13, '#eef4ff', '#2c5aa8', 1.6) + R(8, 1, 15, 3, '#2c5aa8') + R(1, 13, 11, 10, '#2d55a0', '#18306a') + R(4, 13, 5, 4, '#fff') + L('M14 22h2M18 22h2M22 22h2', '#222', 2),
	boxes: F('M1 6L9 3V21L1 19z', '#ddd', '#333', 1.3) + F('M11 8L16 4H23V17L18 21H11z', '#f3c4c4', '#b5242b', 1.5) + L('M14 11h4v6h-4z', '#b5242b', 1.3) + L('M10 1v22', '#333', 1.3) + L('M3 9h4v6H3z', '#333', 1.2),
	angle: L('M1 2V23H22M1 10Q13 12 14 23', '#c22', 1.5) + `<g transform="rotate(44 5 1)">${R(5, 0, 23, 6, '#f3d87a', '#a08020') + L('M8 6v-3M11 6v-3M14 6v-3M17 6v-3M20 6v-3M23 6v-3', '#70590c', 1)}</g>`,
	chain: `<g transform="rotate(-20 12 12)" fill="none" stroke="#9c8d1e"><ellipse cx="12" cy="7" rx="4" ry="6" stroke-width="3"/><ellipse cx="12" cy="17" rx="4" ry="6" stroke-width="3"/><ellipse cx="12" cy="7" rx="4" ry="6" stroke="#e5d768" stroke-width="1"/><ellipse cx="12" cy="17" rx="4" ry="6" stroke="#e5d768" stroke-width="1"/></g>`,
	vLine: L('M3 21L21 4', '#4b3f9a', 1.5) + D(3, 21) + D(21, 4),
	vAxes: L('M10 12V0M10 12L22 7M8 2l2-3l2 3M19 6l4 0l-2 3', '#888', 1.4) + L('M3 14L21 22', '#4b3f9a', 1.6) + L('M10 12L22 17', '#c22', 1.4) + D(4, 14) + D(21, 17, 1.8),
	vPar: L('M3 19L19 4', '#4b3f9a', 1.6) + L('M7 23L23 9', '#c22', 1.4, DASH) + D(3, 19),
	vPerp: L('M2 9L23 16', '#4b3f9a', 1.6) + L('M17 0L9 23', '#c22', 1.4, DASH) + D(3, 9),
	vTan1: O(18, 11, 5.5, '#a33', 1.3, 'none', DASH) + L('M2 16L16 7', '#4b3f9a', 1.6) + D(2, 16),
	vTan2: O(18, 8, 5.5, '#a33', 1.3, 'none', DASH) + O(5, 17, 5.5, '#a33', 1.3, 'none', DASH) + L('M2 12L15 3', '#4b3f9a', 1.6),
	vFree1: L('M1 13Q3 2 9 4T17 12Q23 12 24 4', '#a33', 1.3, DASH) + L('M8 19L14 11', '#4b3f9a', 2) + L('M6 13l5-4M7 8l4 1v4', '#c22', 1.6) + D(8, 18),
	vFree2: L('M1 22Q3 10 9 14T16 20Q22 21 24 12', '#a33', 1.3, DASH) + L('M11 14L18 6', '#4b3f9a', 2) + L('M10 8L15 3M11 2l4 1v4', '#c22', 1.6) + D(18, 6, 1.8),
	vBox: F('M5 5L20 3V21L5 20z', '#8fbcec', '#28447e', 1.3) + L('M1 9L22 7M1 17L24 18M8 1V23M20 1V24', '#433', 1.3) + D(8, 1, 1.5) + D(1, 9, 1.5) + D(22, 16, 1.5) + D(8, 22, 1.5),
	vArc: L('M5 4Q17 6 19 19', '#4b3f9a', 1.6) + D(4, 4) + D(14, 9) + D(19, 19),
	vArc2: L('M4 5Q16 7 19 20', '#4b3f9a', 1.6) + L('M3 0L9 6M16 14L23 20', '#c22', 1.4, DASH) + D(4, 4) + D(19, 20),
	vArc3: L('M0 3H24M0 21H24M20 0v6M20 18v6', '#c22', 1.3, DASH) + L('M11 3Q20 4 20 12T11 21', '#4b3f9a', 1.8),
	vArc4: L('M0 3H24M20 0v24', '#c22', 1.3, DASH) + L('M10 13L18 6M13 5l5 1v5', '#c22', 2) + L('M12 3Q19 4 20 12', '#4b3f9a', 1.6),
	vC1: O(12, 12, 9.5, '#55408c', 1.6) + L('M12 3Q20 4 22 12', '#c22', 2) + D(12, 3) + D(18, 5) + D(21, 12) + D(12, 12, 1.2, '#222'),
	vC2: O(10, 13, 9.5, '#55408c', 1.6) + L('M9 0L24 14', '#c22', 1.3, DASH) + D(8, 4) + D(19, 15) + D(10, 13, 1.2, '#222'),
	vC3: O(10, 12, 9.5, '#55408c', 1.6) + L('M0 3H24M0 21H24M20 0v24', '#c22', 1.2, DASH) + D(10, 12, 1.2, '#222'),
	vC4: O(10, 12, 9.5, '#55408c', 1.6) + L('M0 3H24M20 0v24', '#c22', 1.2, DASH) + L('M10 12L17 6M13 6h4v4', '#c22', 1.8),
	vC5: O(12, 12, 9.5, '#55408c', 1.8) + D(12, 12, 1.8) + D(21, 12),
	vC6: O(12, 12, 9.5, '#55408c', 1.8) + L('M12 12L18 6M14 6h5v4', '#c22', 1.8) + D(12, 12, 1.8),
	vC7: O(10, 13, 9.5, '#55408c', 1.8) + L('M9 0L24 14', '#c22', 1.3, DASH) + D(10, 13, 2),
	sketch: F('M2 1L19 5V23L2 19z', '#ddd', '#333', 1.6) + F('M5 5l5 1v5l-5-1zM11 12l6 1v6l-6-1zM4 12l5 1v4l-5-1z', '#fff', '#333', 1.3) + F('M18 0l1 4l4 0l-3 3l2 4l-4-2l-4 2l1-4l-3-3l4 0z', '#fff04a', '#bba61a'),
	finish: R(0, 0, 24, 24, '#7d93a3') + F('M4 5L14 3L21 5L18 15L12 13L8 16z', '#9aa0a4', '#56636d') + L('M4 5L10 21', '#4c565d', 1.5) + L('M8 5l2 8M14 4l-1 9M6 9l14 0M18 5l-2 8', '#555f66', 1.4),
	profile: L('M2 1V16Q3 21 7 20Q12 19 11 12Q12 5 17 6Q21 7 21 21', '#333', 1.8) + D(2, 12) + D(11, 12) + D(21, 12),
	circle: O(12, 12, 10, '#333', 1.7),
	filletG: L('M1 2H13Q22 3 22 22', '#999', 1.5) + L('M10 2Q21 3 22 13', '#b88', 1.4), chamferG: L('M0 2H10L22 13V22', '#999', 1.5) + L('M10 2L22 13', '#b99', 1.6),
	plus: L('M12 2v20M2 12h20', '#222', 2),
	offsetG: L('M2 22V10L8 3H16V9Q23 10 22 17Q20 22 15 22z', '#999', 1.6) + L('M6 19V12L10 7H12V12Q18 12 18 16Q17 19 14 19z', '#aaa', 1.5),
	triG: L('M1 3H22M4 1V22M4 3L23 22M0 18H22', '#8d8d8d', 1.6),
	trimG: L('M1 15H22M5 1L15 22', '#999', 1.7) + F('M13 12L19 5L23 7L18 15z', '#9c8f7c'),
	extendG: L('M1 15H12M4 1L15 22', '#999', 1.7) + L('M11 17L22 3', '#9c967c', 4), cornerG: L('M1 11H22M14 1V23', '#999', 1.7) + L('M7 3L21 16', '#c6a5a0', 1.5),
	dimG: L('M1 6v14M22 6v14M1 13h21', '#777', 1.7) + F('M1 13l5-3v6zM22 13l-5-3v6z', '#777') + F('M9 14L14 3L20 2L15 14z', '#909090'),
	perpG: L('M1 12L11 1M5 14L15 3M10 20H23M17 20V8', '#9a9a9a', 1.7), boxG: L('M6 3H1V21H23V3H18', '#74749a', 1.8) + L('M12 0v22', '#777', 1.3, 'stroke-dasharray="5 2"') + L('M6 2v6h12V2', '#888', 1.5),
	autoG: F('M0 8v9l6-5z', '#6d9a74') + L('M10 12L20 1M14 14L24 3M12 23h11M17 23V13', '#999', 1.7),
	sqG: R(1, 1, 10, 9, 'none', '#888', 1.5) + R(10, 13, 13, 9, 'none', '#888', 1.5) + R(1, 16, 6, 6, '#a9a9a9', '#888') + L('M12 13L20 5', '#ac9f7e', 4),
	lockG: lock + L('M11 13L21 3', '#aa9f7e', 4), lockH: lock + F('M10 8h6v6h4l-7 5l-7-5h4z', '#9ba7b6'),
};

const DEFS = `<svg class="defs" width="0" height="0" aria-hidden="true">
	<linearGradient id="gBlue" x1="0" y1="0" x2="1" y2="1"><stop offset="0" stop-color="#8fb4f5"/><stop offset=".4" stop-color="#dcebff"/><stop offset="1" stop-color="#4f7fe0"/></linearGradient>
	<linearGradient id="gBlueH"><stop offset="0" stop-color="#5b8bea"/><stop offset=".4" stop-color="#c4dcff"/><stop offset="1" stop-color="#3f6bd0"/></linearGradient>
	<linearGradient id="gGold"><stop offset="0" stop-color="#f59a1e"/><stop offset=".5" stop-color="#ffe07a"/><stop offset="1" stop-color="#f08d1c"/></linearGradient>
	<linearGradient id="gSweep"><stop offset="0" stop-color="#e8732c"/><stop offset=".5" stop-color="#ffb85a"/><stop offset=".8" stop-color="#fff19a"/><stop offset="1" stop-color="#ffd850"/></linearGradient>
	<radialGradient id="gSphere" cx=".35" cy=".3"><stop offset="0" stop-color="#fffbd0"/><stop offset="1" stop-color="#ecc51e"/></radialGradient>
</svg>`;
const svg = name => `<svg viewBox="0 0 24 24" aria-hidden="true">${ICONS[name] || ''}</svg>`;

function define(tag, render){
	customElements.define(tag, class extends HTMLElement{
		constructor(){
			super();
			this.attachShadow({mode:'open'});
		}
		connectedCallback(){
			this.shadowRoot.innerHTML = render(this);
		}
	});
}

define('nx-window', () => `
	<style>
		:host{ display:flex; flex-direction:column; position:relative; box-sizing:border-box; height:100vh; margin:0 103px 0 106px; background:#d8d8d8; overflow:hidden; border-bottom:7px solid #1b1b1b; }
		main{ display:flex; flex:1; min-height:0; }
		.side{ display:flex; background:#d0d0d0; }
		.view{ flex:1; min-width:0; display:flex; }
	</style>
	<slot name="title"></slot><slot name="menu"></slot><slot name="bars"></slot>
	<main><div class="side"><slot name="side"></slot></div><div class="view"><slot name="view"></slot></div></main>
	<slot name="foot"></slot><slot name="status"></slot><slot name="dock"></slot>`);

define('nx-titlebar', () => `
	<style>
		:host{ display:flex; align-items:center; height:33px; box-sizing:border-box; padding:0 1px 0 4px; color:#666; font-family:"Open Sans","Noto Sans CJK SC",sans-serif; font-size:13px;
			background:linear-gradient(#000 0 1px,#6b6b6b 1px,#4c4c4c 10px,#1c1c1c 11px,#191919); white-space:nowrap; border-radius:5px 0 0 0; }
		svg{ width:18px; height:18px; margin-right:3px; }
		.brand{ margin-left:auto; margin-right:30px; color:#fff; font:bold 14px "Noto Sans",sans-serif; }
		button{ width:21px; height:23px; margin-left:4px; padding:0; border:0; border-radius:2px; background:linear-gradient(#777,#333 45%,#222); }
		button svg{ width:17px; height:17px; margin:2px; display:block; }
	</style>
	<svg viewBox="0 0 24 24">${F('M2 8Q4 22 12 22Q24 18 22 5Q16 16 9 14z', '#2c8ad0') + F('M8 12Q18 12 22 4Q22 13 12 18z', '#e8f6ff') + L('M12 22Q21 20 22 8', '#e8a02c', 2) + F('M3 2L13 1L9 12z', '#d62822')}</svg>
	<span><slot></slot></span>
	<span class="brand">SIEMENS</span>
	<button aria-label="最小化"><svg viewBox="0 0 17 17">${R(3, 11, 7, 3, '#fff')}</svg></button>
	<button aria-label="最大化"><svg viewBox="0 0 17 17">${L('M3 3h11v11H3z', '#fff', 1.5) + L('M3 4h11', '#fff', 3)}</svg></button>
	<button aria-label="关闭"><svg viewBox="0 0 17 17">${L('M3 3L14 15M14 3L3 15', '#fff', 2.2)}</svg></button>`);

const MENUS = ['文件(<u>F</u>)', '编辑(<u>E</u>)', '视图(<u>V</u>)', '插入(<u>S</u>)', '格式(<u>R</u>)', '工具(<u>T</u>)', '装配(<u>A</u>)', '信息(<u>I</u>)', '分析(<u>L</u>)', '首选项(<u>P</u>)', '窗口(<u>O</u>)', 'GC 工具箱', '燕秀UG模具8.03', '帮助(<u>H</u>)'];
define('nx-menubar', () => `
	<style>
		:host{ display:flex; align-items:center; height:26px; box-sizing:border-box; padding:0 6px 0 4px; background:linear-gradient(#e9e9e9,#dedede); border-bottom:1px solid #f8f8f8; }
		.grip{ width:3px; height:17px; border-left:2px dotted #999; }
		svg{ width:18px; height:18px; display:block; }
		nav{ display:flex; gap:13px; margin-left:5px; flex:1; }
		nav button{ font:12px/18px "Liberation Mono","Noto Sans CJK SC",monospace; color:#111; border:0; padding:0; background:none; white-space:nowrap; }
		.mdi{ width:18px; height:18px; margin-left:2px; padding:2px; border:1px solid #777; border-radius:3px; background:#f3f3f3; box-sizing:border-box; }
		.mdi svg{ width:12px; height:12px; }
	</style>
	<span class="grip"></span>
	<svg viewBox="0 0 24 24">${F('M5 6L11 2L15 4V12L22 14V20L12 24L3 20z', '#3a78d6', '#1c4596') + F('M5 6L11 2L15 4L9 8z', '#a9ccff') + F('M9 16L15 12L22 14L14 18z', '#8db8f5') + L('M9 8V16', '#8db8f5', 1.5)}</svg>
	<nav>${MENUS.map(m => `<button>${m}</button>`).join('')}</nav>
	<button class="mdi" aria-label="最小化"><svg viewBox="0 0 12 12">${R(2, 8, 7, 2, '#444')}</svg></button>
	<button class="mdi" aria-label="还原"><svg viewBox="0 0 12 12">${L('M4 4V1h7v6H8M1 5h7v6H1z', '#555', 1.6)}</svg></button>
	<button class="mdi" aria-label="关闭"><svg viewBox="0 0 12 12">${L('M2 2L10 10M10 2L2 10', '#444', 2.4)}</svg></button>`);

define('nx-row', () => `
	<style>
		:host{ display:flex; height:36px; background:linear-gradient(#dfdfdf,#d2d2d2); border-bottom:1px solid #c2c2c2; box-sizing:border-box; }
		:host([last]){ height:36px; padding-left:6px; border-top:2px solid #a8a8a8; background:linear-gradient(#cfcfcf,#dcdcdc); align-items:center; }
		:host([foot]){ height:38px; padding:2px 0 0 322px; background:linear-gradient(#e4e6e8,#cccccc); border-bottom:1px solid #f4f4f4; }
	</style><slot></slot>`);

// items: icon names; "|" separator, "v"/"u" drop arrow, ";" overflow, name:label, name* pressed
define('nx-toolbar', el => {
	const parts = el.getAttribute('items').split(' ').map(t => {
		if(t === '|') return '<i class="sep"></i>';
		if(t === 'v' || t === 'u') return `<button class="drop ${t}" aria-label="更多"></button>`;
		if(t === ';') return '<button class="drop over" aria-label="工具条选项"></button>';
		if(t === '<') return '<button class="drop back" aria-label="工具条选项"></button>';
		const [name, label] = t.split(':');
		if(name === '_') return `<button class="text">${label.replace('(M)', '(<u>M</u>)')}</button>`;
		const on = name.endsWith('*'), id = name.replace('*', '');
		return `<button class="tool${on ? ' on' : ''} ${id}"${label ? '' : ` aria-label="${id}"`}>${svg(id)}${label ? `<span>${label}</span>` : ''}</button>`;
	}).join('');
	return `
	<style>
		:host{ display:flex; align-items:center; box-sizing:border-box; padding-left:3px; border-left:1px solid #f5f5f5; border-right:1px solid #bcbcbc; margin-left:1px; background:linear-gradient(#e1e1e1,#d3d3d3); }
		:host([apart]){ margin-left:67px; }
		:host([plain]){ border:0; background:none; margin:0; padding:0 0 0 4px; }
		:host([plain]) .grip{ display:none; }
		:host([end]){ margin-left:auto; }
		.grip{ width:4px; height:24px; border-left:2px dotted #a0a0a0; box-sizing:border-box; }
		.defs{ position:absolute; }
		button{ border:0; padding:0; background:none; font:13px/20px "Liberation Sans","Noto Sans CJK SC",sans-serif; color:#111; white-space:nowrap; flex:none; }
		.tool{ display:flex; align-items:center; height:30px; padding:0 4px; min-width:33px; box-sizing:border-box; }
		.tool svg{ width:24px; height:24px; flex:none; overflow:visible; }
		.tool span{ margin-left:4px; }
		.tool.start, .tool.binoc{ padding-right:0; }
		.tool.finish{ color:#999; }
		.on{ background:#fff; box-shadow:inset 0 0 0 1px #666; border-radius:3px; }
		.text{ padding:0 4px 0 3px; }
		.sep{ width:7px; height:34px; box-sizing:border-box; border-left:1px solid #bcbcbc; margin:0; background:linear-gradient(90deg,#fafafa 1px,transparent 1px); }
		.drop{ width:13px; height:30px; display:flex; align-items:center; justify-content:center; }
		.drop::after{ content:""; border:4px solid transparent; border-top-color:#111; border-bottom:0; }
		.drop.u{ width:8px; }
		.drop.over{ width:14px; align-items:flex-end; padding-bottom:4px; }
		:host([vertical]){ flex-direction:column; width:35px; height:743px; align-self:flex-start; margin:0; border:0; border-right:1px solid #eee; padding:5px 0 0; background:linear-gradient(90deg,#e2e2e2,#cfcfcf); }
		:host([vertical]) .grip{ width:24px; height:4px; border:0; border-top:2px dotted #a0a0a0; }
		:host([vertical]) .tool{ height:33px; }
		:host([vertical]) .sep{ width:32px; height:7px; border:0; background:linear-gradient(#bbb,#bbb) 0 3px/100% 1px no-repeat, linear-gradient(#fff,#fff) 0 4px/100% 1px no-repeat; }
		.drop.back{ align-self:flex-start; margin-left:2px; height:10px; }
		.drop.back::after{ border:4px solid transparent; border-right-color:#111; border-left:0; }
	</style>${DEFS}<i class="grip"></i>${parts}`;
});

define('nx-filter', el => `
	<style>
		:host{ display:block; margin-right:9px; width:${el.getAttribute('wide')}px; flex:none; }
		:host([wide="124"]){ margin-right:0; }
		label{ display:flex; position:relative; }
		select{ appearance:none; width:100%; height:19px; padding:0 18px 0 1px; border:1px solid #777; border-radius:2px; font:13px/17px "Liberation Sans","Noto Sans CJK SC",sans-serif; color:#111;
			background:linear-gradient(#b8dcf8,#5b9ed8) right/17px 100% no-repeat #fff; }
		label::after{ content:""; position:absolute; right:3px; top:6px; border:6px solid transparent; border-top:8px solid #122; border-bottom:0; pointer-events:none; }
	</style>
	<label><select aria-label="${el.getAttribute('label')}"><option>${el.textContent}</option></select></label>`);

define('nx-ime', () => `
	<style>
		:host{ display:flex; align-items:center; margin:0 7px 0 auto; }
		.logo{ width:31px; height:30px; z-index:1; margin-right:-4px; }
		.bar{ display:flex; align-items:center; gap:4px; height:24px; padding:0 6px 0 9px; background:#fff; border:1px solid #aaa; border-left:0; }
		button{ border:0; padding:0; background:none; width:19px; height:20px; font:bold 15px/20px "Noto Sans CJK SC",sans-serif; color:#1b72b8; }
		button svg{ width:18px; height:18px; display:block; }
	</style>
	<svg class="logo" viewBox="0 0 31 30">${F('M1 5L25 1L30 25L6 29z', '#ee6a28', '#cf5117') + L('M22 9Q13 5 10 10Q10 14 16 15Q23 16 21 20Q17 25 8 21', '#fff', 4)}</svg>
	<div class="bar">
		<button>中</button>
		${[O(7, 8, 2.5, '#1b72b8', 1.5) + F('M14 12h4q0 7-4 8z', '#1b72b8'),
			O(12, 12, 10, '#1b72b8', 2) + D(8, 9, 1.6, '#1b72b8') + D(16, 9, 1.6, '#1b72b8') + L('M6 13Q12 21 18 13', '#1b72b8', 2),
			`<rect x="8" y="1" width="8" height="13" rx="4" fill="#1b72b8"/>` + L('M4 10Q5 18 12 18T20 10M12 18v5', '#1b72b8', 2),
			R(1, 4, 22, 16, '#1b72b8') + L('M4 8h16M4 12h16', '#fff', 2, 'stroke-dasharray="2 2"') + L('M7 16h10', '#fff', 2),
			D(11, 6, 4.5, '#aaa') + F('M2 22Q2 12 11 12Q18 12 18 22z', '#aaa') + R(13, 13, 9, 9, '#999', '#fff'),
			F('M7 2Q12 6 17 2L24 7L20 12L18 10V23H6V10L4 12L0 7z', '#1b72b8'),
			R(2, 2, 9, 9, '#1b72b8') + R(14, 3, 7, 7, '#fff', '#1b72b8', 2) + R(2, 14, 9, 9, '#1b72b8') + R(13, 14, 9, 9, '#1b72b8')
		].map((s, i) => `<button aria-label="输入法 ${i + 1}"><svg viewBox="0 0 24 24">${s}</svg></button>`).join('')}
	</div>`);

const TABS = [
	['装配', F('M3 3l5-2l4 2v5l-5 2l-4-2zM8 7l4-2l4 2v5l-4 1l-4-2zM15 18l4-2l4 2v4l-4 1l-4-2z', '#f7c832', '#a37a10') + L('M15 13h9M5 14v10M5 19h6', '#1b2f87', 1.4)],
	['约束', F('M4 1v10l8-5zM20 1v10l-8-5z', '#1b2ca0') + R(1, 15, 9, 9, '#ffee3a', '#444') + F('M14 14Q22 16 23 24H14z', '#d02a1e', '#600') + L('M12 0v24', '#333', 1, DASH)],
	['部件', cyl(1, 3, 10, 7, '#dd8ad0', '#8a2a7c') + L('M14 10h9M5 13v11M5 18h6', '#1b2f87', 1.4) + O(17, 19, 4.5, '#8a2a7c', 1.5) + O(17, 19, 1.5, '#8a2a7c', 1.3)],
	['重用库', F('M0 7L5 2H10L7 7zM7 7L11 2H17L14 7zM14 7L19 2H24L21 7z', '#f4f4ee', '#888') + R(0, 7, 7, 16, '#ff9a2e', '#a86010') + R(7, 7, 7, 16, '#35b04a', '#17702a') + R(14, 7, 7, 16, '#3d8fe8', '#1c559c') + F('M21 7L24 2V19L21 23z', '#2468c0') + L('M15 11h5M15 19h5M8 11h5M1 11h5', '#e4efff', 1)],
	['信息', L('M9 2Q22 3 23 17M9 7Q17 8 18 17', '#3d74c8', 3) + O(8, 16, 7, '#1c55a8', 1.5, '#2f86e0') + L('M8 14v6M6 20h4M6 14h2', '#fff', 1.8) + D(8, 11, 1.3, '#fff'), 'gap'],
	['网页', F('M3 1H16L22 7V23H3z', '#fff', '#2c5aa8', 1.4) + F('M16 1V7H22z', '#b9cff3', '#2c5aa8') + O(12, 15, 5.5, '#1d6f95', 1, '#2e9bb4') + F('M9 12q4-2 5 2q-1 4-4 4z', '#3fae4c'), 'gap'],
	['历史', O(12, 12, 10.5, '#777', 2.4, '#dceaf8') + L('M12 4V13H19', '#1c3264', 1.8) + O(12, 12, 8, '#333', 1, 'none', 'stroke-dasharray="1 3.2"'), 'gap on'],
	['材料', F('M2 6L8 2V19L2 22z', '#eee', '#555') + R(8, 3, 15, 17, '#fff', '#555') + D(12, 7, 1.8, '#d33') + D(12, 12, 1.8, '#3a3') + D(12, 17, 1.8, '#36c') + L('M16 7h5M16 12h5M16 17h5', '#36a', 1.4)],
	['外观', R(1, 1, 9, 22, 'url(#rainbow)', '#666', .5) + D(13, 7, 4, '#fffbd0') + L('M13 8L21 21', '#111', 3)],
	['特效', F('M2 4h7v15H2z', '#3d7ed8', '#1b4c9c') + L('M10 6h14M10 11L22 7M3 9h5M3 14h5M10 8q6 6 12 0', '#5a90d8', 1.6) + D(12, 6, 3, '#eef6ff') + L('M13 9L21 20', '#111', 3) + L('M1 21h10', '#cc3', 2, DASH)],
	['角色', D(17, 6, 5, '#f0bf3c') + F('M10 18Q10 11 17 11T24 18z', '#2f8a36') + D(17, 7, 3, '#ffdf9a') + D(6, 12, 4.5, '#b05a3a') + F('M0 24Q0 17 6 17T13 24z', '#a070d0') + D(6, 13, 2.8, '#f6c9a0')],
	['画册', F('M2 6L8 2V20L2 23z', '#eee', '#555') + R(8, 3, 15, 17, '#fff', '#555') + R(10, 5, 11, 9, '#d33e2e') + F('M12 5h7l-3 9z', '#7ac1f4') + R(10, 15, 11, 2, '#e8a02c')],
];
define('nx-tabs', () => `
	<style>
		:host{ display:flex; flex-direction:column; width:46px; box-sizing:border-box; padding:17px 11px 0 7px; background:linear-gradient(90deg,#aaa 0 32px,#777 35px,#f1f1f1 36px); border-top:1px solid #888; }
		.defs{ position:absolute; }
		button{ height:43px; margin:0 0 2px; padding:0 0 0 1px; border:2px solid #777; border-right:0; border-radius:5px 0 0 5px; background:linear-gradient(90deg,#eee,#d0d0d0); flex:none; }
		button svg{ width:24px; height:24px; display:block; overflow:visible; }
		.gap{ margin-top:12px; }
		.on{ background:#f1f1f1; margin:11px -4px 0 -2px; border-color:#ddd; padding-left:3px; height:46px; }
	</style>
	<svg class="defs" width="0" height="0"><linearGradient id="rainbow" x2="0" y2="1"><stop stop-color="#e22"/><stop offset=".3" stop-color="#fd2"/><stop offset=".6" stop-color="#2d4"/><stop offset="1" stop-color="#22d"/></linearGradient></svg>
	${DEFS}
	${TABS.map(([name, s, cls = '']) => `<button class="${cls}" aria-label="${name}"><svg viewBox="0 0 24 24">${s}</svg></button>`).join('')}`);

// ---------- the part ----------
const OUTLINE = 'M1003 321Q935 321 867 343Q825 357 800 373Q783 387 767 408L750 428Q746 434 741 436L620 467L531 488Q527 490 527 497L531 513L533 537Q536 548 543 557Q551 580 552 612L545 619L550 657L553 680L560 681L700 677Q705 676 708 672Q725 648 747 647Q780 647 807 675Q835 704 839 787L842 827Q872 864 923 891Q960 897 1003 896Q1050 897 1082 892Q1120 880 1164 827L1167 787Q1173 710 1200 677Q1224 650 1250 650Q1261 650 1273 663Q1279 672 1285 676L1417 681L1419 677L1442 677L1444 670L1446 647L1441 637Q1436 610 1443 567Q1451 541 1472 525L1474 507L1477 492L1470 487L1270 437Q1265 436 1263 433L1227 390Q1211 373 1193 363Q1110 321 1003 321z';
const GLASS = 'M1003 489Q920 487 833 474Q810 471 805 457Q808 434 847 387L855 380L856 392L862 393Q905 374 975 372L976 378L982 383H987V387H981V403H987V409H982V415H1026L1028 372Q1100 374 1147 393L1151 392V382Q1172 394 1201 452Q1203 470 1180 473Q1100 488 1003 489z';
const HOLES = 'M576 517Q580 507 590 507L650 504Q670 508 672 522Q682 570 677 640Q673 657 660 659L597 660Q585 657 582 640Q576 570 576 517z'
	+ 'M1347 527L1393 533Q1411 539 1412 553Q1413 590 1402 643Q1397 651 1385 651L1327 643Q1315 638 1315 628Q1311 590 1317 553Q1329 526 1347 527z'
	+ 'M633 492Q650 480 690 484Q680 495 633 492zM1313 493Q1345 488 1375 502Q1335 504 1313 493z'
	+ 'M997 395a6 6 0 1 0 12 0a6 6 0 1 0 -12 0zM855 782q4 2 4 8l-1 6q-4-3-3-14zM1152 782q-4 2-4 8l1 6q4-3 3-14z';
const PANEL = 'M765 509Q820 534 850 552Q890 583 917 623Q958 673 1003 673Q1047 673 1090 623Q1117 583 1157 552Q1187 534 1240 509Q1269 493 1267 475Q1260 450 1245 434L1213 392Q1180 356 1130 345Q1080 329 1003 329Q925 329 875 345Q825 356 792 392L755 434Q738 455 739 475Q742 497 765 509z';
const EDGES = [
	'M1003 329Q925 329 875 345Q825 356 792 392L750 440Q736 460 739 478Q745 499 765 509Q820 534 850 552Q890 583 917 623Q958 672 1003 672Q1047 672 1090 623Q1117 583 1157 552Q1187 534 1240 509Q1269 493 1267 475Q1260 450 1245 434L1213 392Q1180 356 1130 345Q1080 329 1003 329',
	'M1003 336Q920 336 866 366Q842 380 809 434Q792 457 797 467Q803 477 833 481Q920 498 1003 498Q1100 498 1170 481Q1205 476 1212 460Q1214 450 1199 434Q1175 385 1140 362Q1090 336 1003 336',
	'M1003 325Q930 325 870 347Q820 364 800 381L745 437M1003 325Q1080 325 1135 347Q1185 364 1210 381L1262 437',
	'M1003 493Q920 492 833 477Q806 474 801 459Q802 440 843 385M1003 493Q1100 492 1175 478Q1203 474 1206 455Q1203 440 1160 382',
	'M1003 340Q930 340 880 361L855 380M1003 340Q1090 340 1130 361L1151 382M855 380Q920 350 1003 350Q1100 350 1151 380',
	'M765 517Q780 525 850 562Q885 586 912 625Q955 687 1003 687Q1052 687 1094 625Q1127 585 1157 562Q1200 533 1236 517',
	'M762 512Q820 540 845 556Q885 588 912 625Q958 680 1003 680Q1052 680 1095 625Q1122 588 1162 556Q1200 533 1238 512',
	'M1003 320V372M1003 489V894M850 552Q930 535 1003 535Q1070 534 1160 555',
	'M836 481L826 540M1171 481L1182 550M765 509L836 481M1240 509L1171 481M760 435H810M810 434L745 448M1197 434H1247M1197 434L1268 448',
	'M781 388L833 387M815 370L850 371M876 342L884 351M893 338L898 348M912 335L917 345M1096 335L1090 345M1114 338L1108 348M1132 340L1125 350M1190 370H1158M1212 389L1174 387',
	'M529 504L620 479M555 520L630 500Q690 500 732 500M554 522H576M531 500Q552 520 560 545Q568 570 566 605L568 675M554 670L560 545M549 518Q558 530 562 560M552 597H566M568 643H580',
	'M741 436Q722 470 730 500L765 509M735 440Q720 470 733 500M745 446Q727 465 728 480Q727 490 732 500M690 460L735 452M685 500Q695 520 695 560V675M700 495Q715 520 716 570Q718 610 710 660M720 505Q732 530 731 590Q730 620 718 655M690 515H725M691 524H710M695 545H713M695 568H714M680 590L730 588M694 617L728 613M694 638L725 635',
	'M725 520L768 509L771 555V625M728 540H771M732 564L771 558M732 574L770 572M732 585L765 583M728 530Q790 520 833 558Q870 580 900 625M808 545Q804 590 795 617L773 650M740 650L750 620Q780 610 835 632M740 610Q770 595 810 605',
	'M771 527V540M743 527V540M753 526V540M790 532V543M824 558L830 545M855 585L862 573',
	'M1262 433Q1285 460 1276 502M1270 437Q1290 470 1280 500M1268 448L1335 460M1335 455L1327 470M1315 450Q1302 490 1280 518M1268 476L1310 480M1276 505Q1320 525 1360 525H1450M1470 488Q1435 530 1430 570Q1425 620 1430 670M1474 505Q1445 540 1440 590V630M1432 540h8M1430 568h10M1418 592h18M1420 592L1410 650',
	'M1240 509Q1270 520 1312 521M1240 515L1236 560V620M1240 525Q1280 520 1305 530M1236 541L1308 540M1236 558L1300 565M1236 573L1285 577M1236 584L1275 585M1285 545V670M1295 520Q1278 590 1290 668M1314 500Q1300 570 1300 672M1296 503h16M1294 512h17M1292 520h18M1253 527V540M1264 527V540M1278 529V542',
	'M1196 542L1208 617L1220 655M1147 570L1175 605L1200 625M1113 605L1150 635L1165 650M1060 668L1095 690M1240 525Q1190 530 1157 562M1180 540L1185 557M1137 580L1147 570',
	'M1280 525Q1230 590 1220 600Q1170 625 1150 650Q1115 710 1103 755L1100 880M1250 620Q1180 620 1155 660Q1120 700 1106 750Q1098 780 1096 882M1115 672L1128 677M1094 713H1113M1080 774L1103 770M1075 813L1100 809',
	'M800 640Q870 670 890 690Q905 730 907 800L910 885M820 640Q900 690 920 760L932 888M850 695H890M900 714H914M825 744Q850 760 900 780M930 795H1070M940 720Q1000 735 1060 710Q1090 692 1100 692M1120 694L1180 690M1103 785Q1140 765 1172 740M1070 820V890',
	'M557 668L690 664Q705 664 720 650M1285 668L1440 672M622 490Q620 463 660 463Q702 465 698 485Q680 505 640 500zM628 488Q650 477 690 480M1309 490Q1310 471 1346 471Q1386 475 1386 503L1375 505M1312 488Q1340 480 1380 495M1318 500Q1345 512 1372 504',
	'M576 517L574 600M1314 560Q1325 522 1350 524L1400 531Q1417 538 1418 556L1414 610L1404 648M1310 570L1313 630'
];
define('nx-viewport', () => `
	<style>
		:host{ display:block; flex:1; min-width:0; background:linear-gradient(#b3b5b6,#bfc1c2 18%,#d2d4d5 50%,#e3e5e7 75%,#e5e7e9); }
		svg{ display:block; width:100%; height:100%; }
	</style>
	<svg viewBox="187 203 1630 809" preserveAspectRatio="xMidYMid meet" role="img" aria-label="motuochetouzhao.prt">
		<defs>
			<linearGradient id="body" gradientUnits="userSpaceOnUse" x1="0" y1="321" x2="0" y2="896"><stop offset="0" stop-color="#009c00"/><stop offset=".3" stop-color="#00a600"/><stop offset=".42" stop-color="#008a00"/><stop offset=".6" stop-color="#005800"/><stop offset=".8" stop-color="#005500"/><stop offset="1" stop-color="#005c00"/></linearGradient>
			<linearGradient id="panel" gradientUnits="userSpaceOnUse" x1="0" y1="329" x2="0" y2="673"><stop offset="0" stop-color="#00a400"/><stop offset=".5" stop-color="#00a500"/><stop offset=".66" stop-color="#009400"/><stop offset="1" stop-color="#007d00"/></linearGradient>
			<filter id="soft" x="-50%" y="-50%" width="200%" height="200%"><feGaussianBlur stdDeviation="10"/></filter>
			<filter id="soft2" x="-50%" y="-50%" width="200%" height="200%"><feGaussianBlur stdDeviation="4"/></filter>
			<mask id="cut"><path d="${OUTLINE}" fill="#fff"/><path d="${GLASS + HOLES}" fill="#000"/></mask>
		</defs>
		<g mask="url(#cut)">
			<path d="${OUTLINE}" fill="url(#body)"/>
			<g filter="url(#soft)">
				<path d="M735 535Q800 530 850 575Q880 610 900 650L800 650L710 600z" fill="#006c00"/>
				<path d="M1270 540Q1200 530 1160 575L1100 640L1060 700L1120 720L1160 640L1280 600z" fill="#006400"/>
				<path d="M715 670L735 632Q765 605 820 628Q880 665 905 720L850 730Q815 660 760 640z" fill="#003c00"/>
				<path d="M1290 680L1275 640Q1245 605 1195 628Q1165 650 1155 700L1180 720Q1200 650 1250 645z" fill="#003c00"/>
				<path d="M545 655H715V690H545zM1290 655H1450V690H1290z" fill="#004800"/>
				<path d="M900 700V900H1060V700z" fill="#004b00"/>
				<path d="M525 520L560 560V640H540z" fill="#006000"/>
				<path d="M1160 720V820L1110 870V720z" fill="#006400"/>
			</g>
			<g filter="url(#soft2)">
				<path d="M696 512L710 530L712 580L698 590z" fill="#0fa80f"/><ellipse cx="703" cy="548" rx="5" ry="11" fill="#38d638"/>
				<ellipse cx="744" cy="523" rx="13" ry="6" fill="#20b820"/>
				<path d="M1308 510L1293 545L1296 570L1310 535z" fill="#0ca80c"/>
				<path d="M1303 500Q1282 540 1285 650" fill="none" stroke="#005000" stroke-width="8"/>
				<path d="M1437 580Q1430 620 1436 670" fill="none" stroke="#008000" stroke-width="7"/>
				<path d="M765 512Q820 537 850 555Q890 586 917 626Q958 682 1003 682Q1047 682 1090 626Q1117 586 1157 555Q1187 537 1240 512" fill="none" stroke="#004c00" stroke-opacity=".6" stroke-width="26"/>
			</g>
			<path d="${PANEL}" fill="none" stroke="#007a00" stroke-width="20"/>
			<path d="${PANEL}" fill="url(#panel)"/>
			<path d="M867 343Q825 357 800 373L745 437M1193 363L1227 390L1263 433" fill="none" stroke="#008e00" stroke-width="12"/>
			<g filter="url(#soft2)"><path d="M785 507L833 486L860 490L828 520z" fill="#0bb00b"/><path d="M1222 507L1172 486L1135 492L1178 520z" fill="#10b810"/></g>
			<path d="M855 380Q910 340 1003 340Q1100 340 1151 380V394Q1100 373 1003 373Q905 373 856 394z" fill="#005600"/>
			<path d="M875 368Q925 346 1003 346Q1085 346 1135 368" fill="none" stroke="#003c00" stroke-width="5"/>
			<path d="M976 374H1028V415H980z" fill="#009200"/><path d="M982 411h44M1025 374v40M976 374h52" stroke="#005a00" stroke-width="3"/>
			<path d="M624 492Q622 466 660 465Q698 467 696 484Q650 472 628 494z" fill="#007400"/>
			<path d="M1314 488Q1318 474 1347 474Q1382 478 1383 502Q1350 484 1314 490z" fill="#007400"/>
			<path d="M846 780Q844 769 858 769L852 780L860 806Q847 797 846 780zM1147 768Q1162 768 1160 780Q1158 800 1148 806z" fill="#003b00"/>
			<path d="M849 788q2 8 10 15l-3-9zM1149 804q8-6 9-16l-6 7z" fill="#20a830"/>
			<path d="M616 654h22v7h-22zM672 539h5v18h-5zM674 607h5v20h-5z" fill="#007000"/>
			<g fill="none" stroke="#17401a" stroke-width="1" stroke-opacity=".8">${EDGES.map(d => `<path d="${d}"/>`).join('')}</g>
		</g>
		<path d="${OUTLINE + GLASS + HOLES}" fill="none" stroke="#22502a" stroke-width="1.5"/>
		<path d="M616 654h22v6h-22z" fill="#008a00" stroke="#17401a"/>
		<rect x="253" y="920" width="26" height="26" fill="#cccfcf" stroke="#a2a5a5"/>
		<path d="M252 944V905" stroke="#3c8a44" stroke-width="3"/><path d="M249 918l-1-4l4-11l4 11l-1 4z" fill="#2a7a34"/>
		<path d="M254 946H298" stroke="#c44a42" stroke-width="2"/><path d="M279 942l5-1l10 5l-10 5l-5-1z" fill="#d23a30"/>
		<rect x="248" y="942" width="8" height="8" fill="#1c3fb0"/>
		<g font-family="Liberation Sans" font-size="14" text-anchor="middle"><text x="252" y="902" fill="#5a9a60">Y</text><text x="302" y="951" fill="#d4605a">X</text></g>
	</svg>`);

define('nx-status', () => `
	<style>
		:host{ display:flex; height:23px; box-sizing:border-box; background:#d8d8d8; }
		p{ margin:0; margin-left:794px; padding-left:4px; border-left:1px solid #aaa; font:bold 14px/20px "Noto Sans CJK SC",sans-serif; color:#000; }
	</style><p><slot></slot></p>`);

// dark tool strip floating over the lower right corner
define('nx-dock', () => `
	<style>
		:host{ display:flex; align-items:center; position:absolute; right:0; bottom:-7px; height:31px; width:590px; box-sizing:border-box; padding:0 7px 2px 5px; background:#3c4047; border-radius:8px 0 0 8px; }
		nav{ display:flex; flex:1; margin-left:6px; }
		button{ border:0; padding:0; background:none; color:#b9bdc2; font:13px/28px "Noto Sans CJK SC",sans-serif; flex:none; }
		nav button{ width:61px; }
		nav .more{ width:13px; margin-left:15px; }
		svg{ display:block; width:14px; height:20px; overflow:visible; }
		.power{ margin-left:11px; }
		.power svg{ width:22px; height:24px; }
	</style>
	<button aria-label="向左"><svg viewBox="0 0 14 20">${L('M0 4v12M3 4v12', '#6b6f75', 1) + F('M15 7v6l-8-3z', '#84888e')}</svg></button>
	<nav>${['画板', '签到', '答题卡', '画中画', '大头贴', '举手', '预览', '工具'].map(t => `<button>${t}</button>`).join('')}<button class="more">阝</button></nav>
	<button aria-label="向右"><svg viewBox="0 0 14 20">${F('M1 7v7l11-3z', '#c4c8cc')}</svg></button>
	<button class="power" aria-label="关闭"><svg viewBox="0 0 22 24">${L('M6 5Q1 9 2 14Q4 21 11 21T20 14Q21 9 16 5M11 2v11', '#b4b8bd', 2.4)}</svg></button>`);
</script>
</body>
</html>
